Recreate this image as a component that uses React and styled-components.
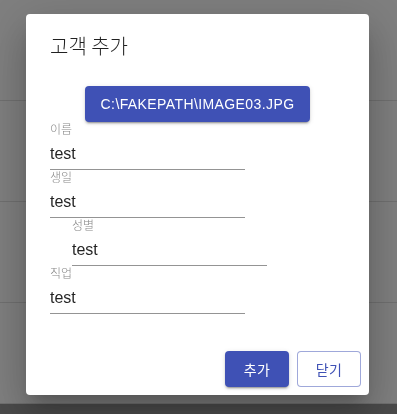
import React from 'react'
import styled, { createGlobalStyle } from 'styled-components'

const GlobalStyle = createGlobalStyle`
  html, body {
    margin: 0;
    padding: 0;
    background: #fff;
    font-family: "Liberation Sans", "Noto Sans CJK KR", sans-serif;
  }
  * { box-sizing: border-box; }
`

const Page = styled.div`
  width: 397px;
  height: 414px;
  overflow: hidden;
  background: #fff;
`

const TableRow = styled.div`
  height: 101px;
  border-bottom: 1px solid #e0e0e0;
`

const Footer = styled.div`
  height: 20px;
  background: #959595;
`

const Backdrop = styled.div`
  position: fixed;
  inset: 0;
  background: rgba(0, 0, 0, 0.5);
  display: flex;
  justify-content: center;
  align-items: flex-start;
  padding: 14px 2px 0 0;
`

const Dialog = styled.div`
  width: 343px;
  background: #fff;
  border-radius: 4px;
  box-shadow: 0px 11px 15px -7px rgba(0, 0, 0, 0.2),
    0px 24px 38px 3px rgba(0, 0, 0, 0.14),
    0px 9px 46px 8px rgba(0, 0, 0, 0.12);
  display: flex;
  flex-direction: column;
`

const Title = styled.h2`
  margin: 0;
  padding: 16px 24px;
  font-family: "Noto Sans CJK KR", sans-serif;
  font-size: 20px;
  font-weight: 300;
  line-height: 32px;
  color: rgba(0, 0, 0, 0.87);
`

const Content = styled.div`
  padding: 8px 24px 29px;
  display: flex;
  flex-direction: column;
`

const UploadRow = styled.div`
  display: flex;
  justify-content: center;
`

const Button = styled.button`
  height: 36px;
  min-width: 64px;
  padding: 0 16px;
  border-radius: 4px;
  font-family: "Liberation Sans", "Noto Sans CJK KR", sans-serif;
  font-size: 14px;
  font-weight: 400;
  letter-spacing: 0.4px;
  text-transform: uppercase;
  cursor: pointer;
  color: ${p => (p.$outlined ? '#3f51b5' : '#fff')};
  background: ${p => (p.$outlined ? '#fff' : '#3f51b5')};
  border: ${p => (p.$outlined ? '1px solid rgba(63, 81, 181, 0.5)' : 'none')};
  box-shadow: ${p =>
    p.$outlined
      ? 'none'
      : '0px 3px 1px -2px rgba(0,0,0,0.2), 0px 2px 2px 0px rgba(0,0,0,0.14), 0px 1px 5px 0px rgba(0,0,0,0.12)'};
`

const Field = styled.div`
  width: 195px;
  margin-left: ${p => p.$indent || 0}px;
  display: flex;
  flex-direction: column;
`

const Label = styled.label`
  height: 16px;
  padding-top: 1.5px;
  font-family: "Liberation Sans", "Noto Sans CJK KR", sans-serif;
  font-size: 12px;
  font-weight: 300;
  line-height: 12px;
  color: rgba(0, 0, 0, 0.5);
`

const Input = styled.input`
  width: 100%;
  height: 32px;
  padding: 6px 0 6px;
  border: none;
  border-bottom: 1px solid rgba(0, 0, 0, 0.42);
  outline: none;
  background: transparent;
  font-family: "Liberation Sans", "Noto Sans CJK KR", sans-serif;
  font-size: 16px;
  line-height: 19px;
  color: rgba(0, 0, 0, 0.87);
`

const Actions = styled.div`
  padding: 8px;
  display: flex;
  justify-content: flex-end;
  gap: 8px;
`

const fields = [
  { label: '이름', value: 'test' },
  { label: '생일', value: 'test' },
  { label: '성별', value: 'test', indent: 22 },
  { label: '직업', value: 'test' },
]

export default function App() {
  return (
    <>
      <GlobalStyle />
      <Page>
        <TableRow />
        <TableRow />
        <TableRow />
        <TableRow />
        <Footer />
      </Page>
      <Backdrop>
        <Dialog>
          <Title>고객 추가</Title>
          <Content>
            <UploadRow>
              <Button>C:\FAKEPATH\IMAGE03.JPG</Button>
            </UploadRow>
            {fields.map(f => (
              <Field key={f.label} $indent={f.indent}>
                <Label>{f.label}</Label>
                <Input defaultValue={f.value} />
              </Field>
            ))}
          </Content>
          <Actions>
            <Button>추가</Button>
            <Button $outlined>닫기</Button>
          </Actions>
        </Dialog>
      </Backdrop>
    </>
  )
}
